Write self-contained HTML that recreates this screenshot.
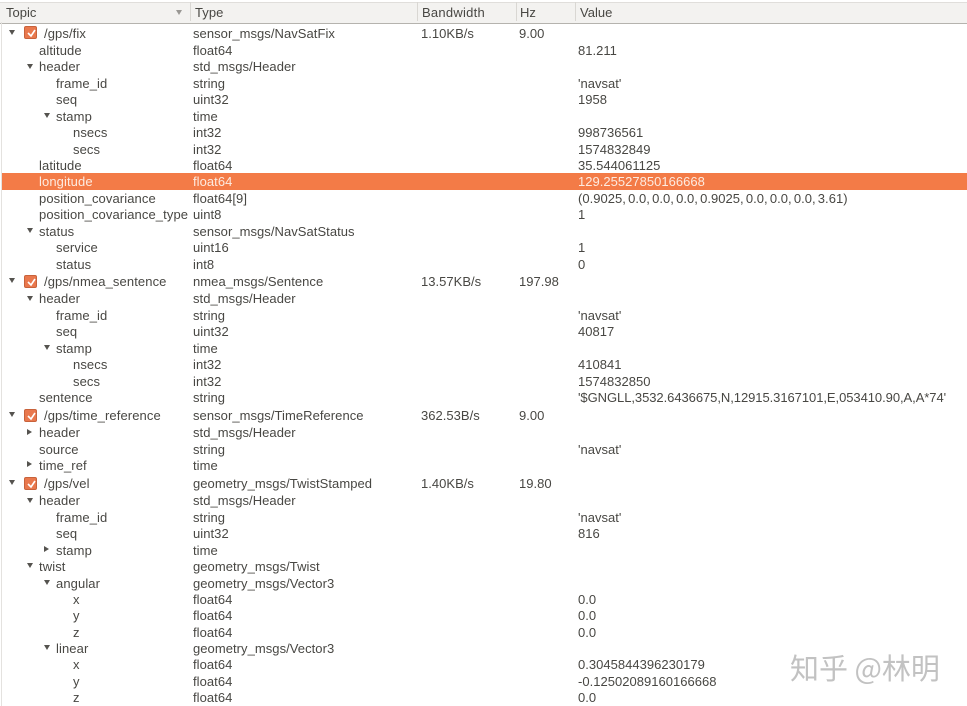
<!DOCTYPE html>
<html><head><meta charset="utf-8"><style>
html,body{margin:0;padding:0;background:#fff}
#p{position:relative;width:967px;height:706px;overflow:hidden;background:#fff;font:13px/16px "Liberation Sans",sans-serif;color:#484743;letter-spacing:.02px}
#h{position:absolute;left:0;top:2px;width:967px;height:20px;background:#f3f2f0;border-bottom:1px solid #b5b3ae;border-top:1px solid #e0dedb}
.s{position:absolute;top:2px;width:1px;height:19px;background:#d9d7d3}
#e{position:absolute;left:1px;top:22px;width:1px;height:684px;background:#e4e2df}
.r{position:absolute;left:0;width:967px;height:16px;white-space:pre;margin-top:1px}
.r span{position:absolute;top:0}
.a{left:193px;letter-spacing:.05px}.b{left:421px}.c{left:519px}.d{left:578px}
.l1,.l2,.l3,.l0{letter-spacing:.1px}
.l1{left:39px}.l2{left:56px}.l3{left:73px}.l0{left:44px}
.hl{position:absolute;left:2px;top:173px;width:965px;height:17px;background:#f37b47}
.w span{color:#fdebe0}
.o,.x{position:absolute;width:0;height:0;border-style:solid}
.o{border-width:5px 3.5px 0 3.5px;border-color:#55534f transparent transparent}
.x{border-width:3.5px 0 3.5px 5px;border-color:transparent transparent transparent #55534f}
.k{position:absolute;left:24px;width:13px;height:13px;background:#e9784d;border-radius:2px;border:1px solid #c8623b;box-sizing:border-box}
.k svg{position:absolute;left:1px;top:1px}
#wm{position:absolute;left:790px;top:650px;font:400 29px/34px "Noto Sans CJK SC",sans-serif;color:#c2c2c2;letter-spacing:0;white-space:pre}
</style></head><body><div id="p">
<div id="h"></div><div id="e"></div>
<div class="s" style="left:190px"></div><div class="s" style="left:417px"></div><div class="s" style="left:516px"></div><div class="s" style="left:575px"></div>
<div class="o" style="left:176px;top:10px;border-color:#9a9894 transparent transparent"></div>
<div class="r" style="top:4px"><span style="left:6px">Topic</span><span class="a" style="left:195px">Type</span><span class="b" style="left:422px;letter-spacing:.25px">Bandwidth</span><span class="c" style="left:520px">Hz</span><span class="d" style="left:580px">Value</span></div>
<div class="hl"></div>

<div class="o" style="left:9px;top:30px"></div><div class="k" style="top:26px"><svg width="11" height="11"><path d="M2 5l3 3 4-6" fill="none" stroke="#fff" stroke-width="1.6"/></svg></div>
<div class="r" style="top:25px"><span class="l0">/gps/fix</span><span class="a">sensor_msgs/NavSatFix</span><span class="b">1.10KB/s</span><span class="c">9.00</span></div>
<div class="r" style="top:42px"><span class="l1">altitude</span><span class="a">float64</span><span class="d">81.211</span></div>
<div class="o" style="left:27px;top:64px"></div>
<div class="r" style="top:58px"><span class="l1">header</span><span class="a">std_msgs/Header</span></div>
<div class="r" style="top:75px"><span class="l2">frame_id</span><span class="a">string</span><span class="d">'navsat'</span></div>
<div class="r" style="top:91px"><span class="l2">seq</span><span class="a">uint32</span><span class="d">1958</span></div>
<div class="o" style="left:44px;top:113px"></div>
<div class="r" style="top:108px"><span class="l2">stamp</span><span class="a">time</span></div>
<div class="r" style="top:124px"><span class="l3">nsecs</span><span class="a">int32</span><span class="d">998736561</span></div>
<div class="r" style="top:141px"><span class="l3">secs</span><span class="a">int32</span><span class="d">1574832849</span></div>
<div class="r" style="top:157px"><span class="l1">latitude</span><span class="a">float64</span><span class="d">35.544061125</span></div>
<div class="r w" style="top:173px"><span class="l1">longitude</span><span class="a">float64</span><span class="d">129.25527850166668</span></div>
<div class="r" style="top:190px"><span class="l1">position_covariance</span><span class="a">float64[9]</span><span class="d" style="word-spacing:-1.4px">(0.9025, 0.0, 0.0, 0.0, 0.9025, 0.0, 0.0, 0.0, 3.61)</span></div>
<div class="r" style="top:206px"><span class="l1">position_covariance_type</span><span class="a">uint8</span><span class="d">1</span></div>
<div class="o" style="left:27px;top:228px"></div>
<div class="r" style="top:223px"><span class="l1">status</span><span class="a">sensor_msgs/NavSatStatus</span></div>
<div class="r" style="top:239px"><span class="l2">service</span><span class="a">uint16</span><span class="d">1</span></div>
<div class="r" style="top:256px"><span class="l2">status</span><span class="a">int8</span><span class="d">0</span></div>

<div class="o" style="left:9px;top:278px"></div><div class="k" style="top:275px"><svg width="11" height="11"><path d="M2 5l3 3 4-6" fill="none" stroke="#fff" stroke-width="1.6"/></svg></div>
<div class="r" style="top:273px"><span class="l0">/gps/nmea_sentence</span><span class="a">nmea_msgs/Sentence</span><span class="b">13.57KB/s</span><span class="c">197.98</span></div>
<div class="o" style="left:27px;top:296px"></div>
<div class="r" style="top:290px"><span class="l1">header</span><span class="a">std_msgs/Header</span></div>
<div class="r" style="top:307px"><span class="l2">frame_id</span><span class="a">string</span><span class="d">'navsat'</span></div>
<div class="r" style="top:323px"><span class="l2">seq</span><span class="a">uint32</span><span class="d">40817</span></div>
<div class="o" style="left:44px;top:345px"></div>
<div class="r" style="top:340px"><span class="l2">stamp</span><span class="a">time</span></div>
<div class="r" style="top:356px"><span class="l3">nsecs</span><span class="a">int32</span><span class="d">410841</span></div>
<div class="r" style="top:373px"><span class="l3">secs</span><span class="a">int32</span><span class="d">1574832850</span></div>
<div class="r" style="top:389px"><span class="l1">sentence</span><span class="a">string</span><span class="d" style="letter-spacing:-.06px">'$GNGLL,3532.6436675,N,12915.3167101,E,053410.90,A,A*74'</span></div>

<div class="o" style="left:9px;top:412px"></div><div class="k" style="top:409px"><svg width="11" height="11"><path d="M2 5l3 3 4-6" fill="none" stroke="#fff" stroke-width="1.6"/></svg></div>
<div class="r" style="top:407px"><span class="l0">/gps/time_reference</span><span class="a">sensor_msgs/TimeReference</span><span class="b">362.53B/s</span><span class="c">9.00</span></div>
<div class="x" style="left:27px;top:429px"></div>
<div class="r" style="top:424px"><span class="l1">header</span><span class="a">std_msgs/Header</span></div>
<div class="r" style="top:441px"><span class="l1">source</span><span class="a">string</span><span class="d">'navsat'</span></div>
<div class="x" style="left:27px;top:461px"></div>
<div class="r" style="top:457px"><span class="l1">time_ref</span><span class="a">time</span></div>

<div class="o" style="left:9px;top:480px"></div><div class="k" style="top:477px"><svg width="11" height="11"><path d="M2 5l3 3 4-6" fill="none" stroke="#fff" stroke-width="1.6"/></svg></div>
<div class="r" style="top:475px"><span class="l0">/gps/vel</span><span class="a">geometry_msgs/TwistStamped</span><span class="b">1.40KB/s</span><span class="c">19.80</span></div>
<div class="o" style="left:27px;top:498px"></div>
<div class="r" style="top:492px"><span class="l1">header</span><span class="a">std_msgs/Header</span></div>
<div class="r" style="top:509px"><span class="l2">frame_id</span><span class="a">string</span><span class="d">'navsat'</span></div>
<div class="r" style="top:525px"><span class="l2">seq</span><span class="a">uint32</span><span class="d">816</span></div>
<div class="x" style="left:44px;top:546px"></div>
<div class="r" style="top:542px"><span class="l2">stamp</span><span class="a">time</span></div>
<div class="o" style="left:27px;top:563px"></div>
<div class="r" style="top:558px"><span class="l1">twist</span><span class="a">geometry_msgs/Twist</span></div>
<div class="o" style="left:44px;top:580px"></div>
<div class="r" style="top:575px"><span class="l2">angular</span><span class="a">geometry_msgs/Vector3</span></div>
<div class="r" style="top:591px"><span class="l3">x</span><span class="a">float64</span><span class="d">0.0</span></div>
<div class="r" style="top:607px"><span class="l3">y</span><span class="a">float64</span><span class="d">0.0</span></div>
<div class="r" style="top:624px"><span class="l3">z</span><span class="a">float64</span><span class="d">0.0</span></div>
<div class="o" style="left:44px;top:645px"></div>
<div class="r" style="top:640px"><span class="l2">linear</span><span class="a">geometry_msgs/Vector3</span></div>
<div class="r" style="top:656px"><span class="l3">x</span><span class="a">float64</span><span class="d">0.3045844396230179</span></div>
<div class="r" style="top:673px"><span class="l3">y</span><span class="a">float64</span><span class="d">-0.12502089160166668</span></div>
<div class="r" style="top:689px"><span class="l3">z</span><span class="a">float64</span><span class="d">0.0</span></div>
<div id="wm">知乎 @林明</div>
</div></body></html>
